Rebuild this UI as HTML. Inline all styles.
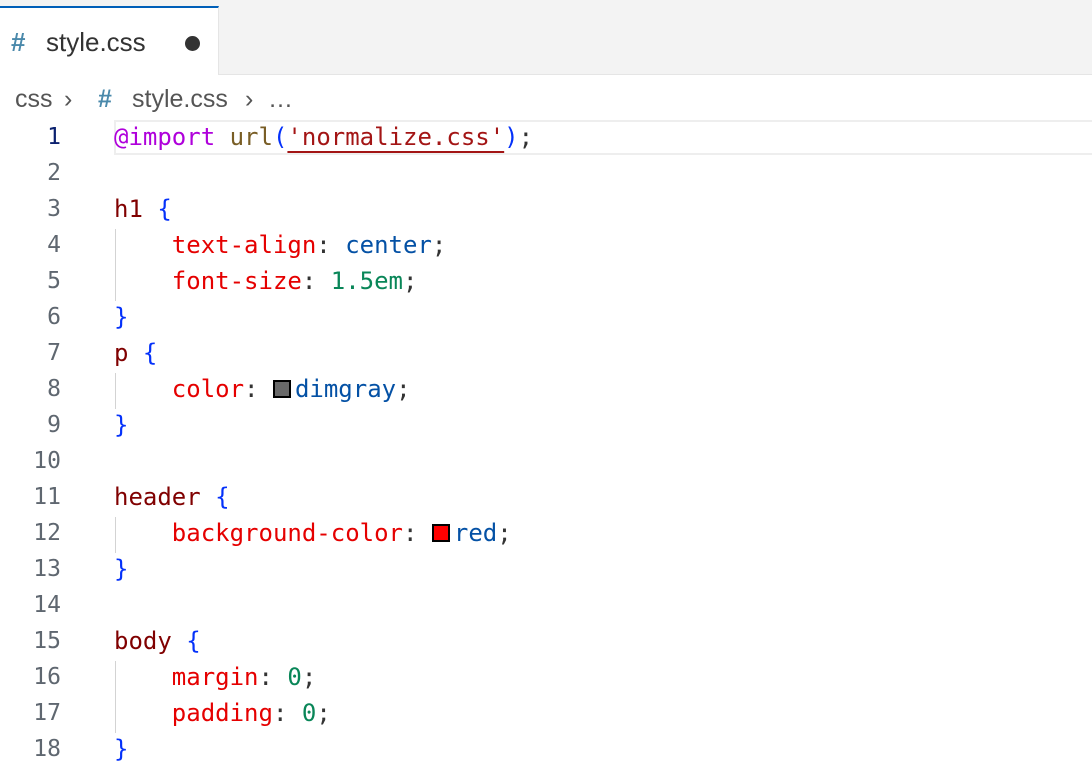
<!DOCTYPE html>
<html><head><meta charset="utf-8"><style>
body{margin:0;width:1092px;height:772px;background:#fff;overflow:hidden;position:relative;font-family:"DejaVu Sans Mono","Liberation Mono",monospace}
.tabbar{position:absolute;left:0;top:0;width:1092px;height:74px;background:#f3f3f3;border-bottom:1px solid #e5e5e5}
.tab{position:absolute;left:0;top:6px;width:219px;height:69px;background:#fff;border-top:2px solid #005fb8;box-sizing:border-box;border-right:1px solid #e5e5e5;font-family:"Liberation Sans",sans-serif;font-size:26px;color:#333}
.tab .h{position:absolute;left:11px;top:19px;color:#4a89ab;font-weight:bold;font-size:26px}
.tab .n{position:absolute;left:46px;top:19px}
.tab .dot{position:absolute;left:185px;top:28px;width:15px;height:15px;border-radius:50%;background:#333}
.bc{position:absolute;top:85px;font-family:"Liberation Sans",sans-serif;font-size:25px;color:#555;white-space:pre}
.bc.h{color:#4a89ab;font-weight:bold}
.hl{position:absolute;left:114px;top:120px;width:990px;height:35px;border:2px solid #eeeeee;box-sizing:border-box}
.ln{position:absolute;left:0;width:61px;text-align:right;font-size:23px;color:#5f6770;line-height:36px}
.ln.a{color:#0b216f}
.c{position:absolute;left:114px;font-size:24px;line-height:36px;white-space:pre;color:#333}
.g{position:absolute;left:115px;width:1px;height:36px;background:#d3d3d3}
.at{color:#af00db}.fn{color:#795e26}.br{color:#0431fa}.st{color:#a31515;text-decoration:underline;text-decoration-color:#a31515;text-underline-offset:6px}
.sel{color:#800000}.pr{color:#e50000}.v{color:#0451a5}.nm{color:#098658}
.sw{display:inline-block;width:18px;height:18px;border:2px solid #000;vertical-align:-1px;margin-right:4px;box-sizing:border-box}
</style></head><body>
<div class="tabbar"></div>
<div class="tab"><span class="h">#</span><span class="n">style.css</span><span class="dot"></span></div>
<div class="bc" style="left:15px">css</div><div class="bc" style="left:64px">›</div>
<div class="bc h" style="left:98px">#</div><div class="bc" style="left:132px">style.css</div>
<div class="bc" style="left:245px">›</div><div class="bc" style="left:268px">…</div>
<div class="hl"></div>
<div class="ln a" style="top:119px">1</div><div class="c" style="top:119px"><span class="at">@import</span> <span class="fn">url</span><span class="br">(</span><span class="st">'normalize.css'</span><span class="br">)</span>;</div>
<div class="ln" style="top:155px">2</div>
<div class="ln" style="top:191px">3</div><div class="c" style="top:191px"><span class="sel">h1</span> <span class="br">{</span></div>
<div class="ln" style="top:227px">4</div><div class="g" style="top:229px"></div><div class="c" style="top:227px">    <span class="pr">text-align</span>: <span class="v">center</span>;</div>
<div class="ln" style="top:263px">5</div><div class="g" style="top:265px"></div><div class="c" style="top:263px">    <span class="pr">font-size</span>: <span class="nm">1.5em</span>;</div>
<div class="ln" style="top:299px">6</div><div class="c" style="top:299px"><span class="br">}</span></div>
<div class="ln" style="top:335px">7</div><div class="c" style="top:335px"><span class="sel">p</span> <span class="br">{</span></div>
<div class="ln" style="top:371px">8</div><div class="g" style="top:373px"></div><div class="c" style="top:371px">    <span class="pr">color</span>: <span class="sw" style="background:#696969"></span><span class="v">dimgray</span>;</div>
<div class="ln" style="top:407px">9</div><div class="c" style="top:407px"><span class="br">}</span></div>
<div class="ln" style="top:443px">10</div>
<div class="ln" style="top:479px">11</div><div class="c" style="top:479px"><span class="sel">header</span> <span class="br">{</span></div>
<div class="ln" style="top:515px">12</div><div class="g" style="top:517px"></div><div class="c" style="top:515px">    <span class="pr">background-color</span>: <span class="sw" style="background:#f00"></span><span class="v">red</span>;</div>
<div class="ln" style="top:551px">13</div><div class="c" style="top:551px"><span class="br">}</span></div>
<div class="ln" style="top:587px">14</div>
<div class="ln" style="top:623px">15</div><div class="c" style="top:623px"><span class="sel">body</span> <span class="br">{</span></div>
<div class="ln" style="top:659px">16</div><div class="g" style="top:661px"></div><div class="c" style="top:659px">    <span class="pr">margin</span>: <span class="nm">0</span>;</div>
<div class="ln" style="top:695px">17</div><div class="g" style="top:697px"></div><div class="c" style="top:695px">    <span class="pr">padding</span>: <span class="nm">0</span>;</div>
<div class="ln" style="top:731px">18</div><div class="c" style="top:731px"><span class="br">}</span></div>
</body></html>
